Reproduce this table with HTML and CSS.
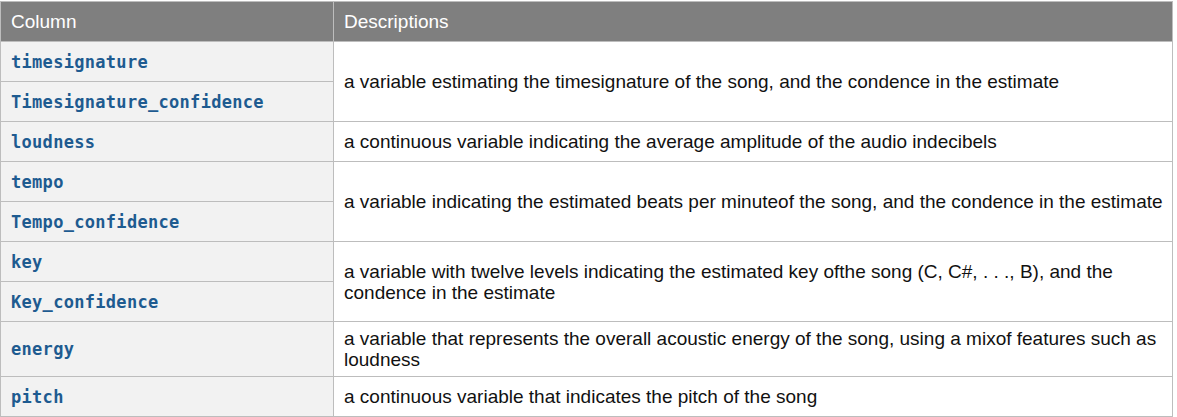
FILE: index.html
```html
<!DOCTYPE html>
<html>
<head>
<meta charset="utf-8">
<link rel="stylesheet" href="styles.css">
</head>
<body>
<table class="spec">
  <colgroup><col class="c1"><col class="c2"></colgroup>
  <thead>
    <tr><th>Column</th><th>Descriptions</th></tr>
  </thead>
  <tbody>
    <tr class="r"><td class="name">timesignature</td><td class="desc" rowspan="2">a variable estimating the timesignature of the song, and the condence in the estimate</td></tr>
    <tr class="r"><td class="name">Timesignature_confidence</td></tr>
    <tr class="r"><td class="name">loudness</td><td class="desc">a continuous variable indicating the average amplitude of the audio indecibels</td></tr>
    <tr class="r"><td class="name">tempo</td><td class="desc" rowspan="2">a variable indicating the estimated beats per minuteof the song, and the condence in the estimate</td></tr>
    <tr class="r"><td class="name">Tempo_confidence</td></tr>
    <tr class="r"><td class="name">key</td><td class="desc" rowspan="2">a variable with twelve levels indicating the estimated key ofthe song (C, C#, . . ., B), and the condence in the estimate</td></tr>
    <tr class="r"><td class="name">Key_confidence</td></tr>
    <tr class="tall"><td class="name">energy</td><td class="desc">a variable that represents the overall acoustic energy of the song, using a mixof features such as loudness</td></tr>
    <tr class="r"><td class="name">pitch</td><td class="desc">a continuous variable that indicates the pitch of the song</td></tr>
  </tbody>
</table>
</body>
</html>
```

FILE: styles.css
```css
html, body {
  margin: 0;
  padding: 0;
  background: #ffffff;
}
body {
  padding: 1px 0 0 0;
}
.spec {
  border-collapse: collapse;
  width: 1173px;
  table-layout: fixed;
  font-family: "Liberation Sans", Arial, sans-serif;
  font-size: 19px;
  color: #111111;
}
.c1 { width: 333px; }
.spec th, .spec td {
  border: 1px solid #bdbdbd;
  padding: 0 2px 0 10px;
  text-align: left;
  vertical-align: middle;
}
.spec th {
  background: #7f7f7f;
  color: #ffffff;
  font-weight: normal;
  height: 39px;
  font-size: 19px;
}
.spec tr.r td { height: 39px; }
.spec tr.tall td { height: 54px; }
.spec td.name {
  background: #f2f2f2;
  font-family: "DejaVu Sans Mono", monospace;
  font-weight: bold;
  font-size: 17px;
  color: #1e5b90;
  letter-spacing: 0.3px;
}
.spec td.desc {
  background: #ffffff;
  line-height: 21px;
}
```
